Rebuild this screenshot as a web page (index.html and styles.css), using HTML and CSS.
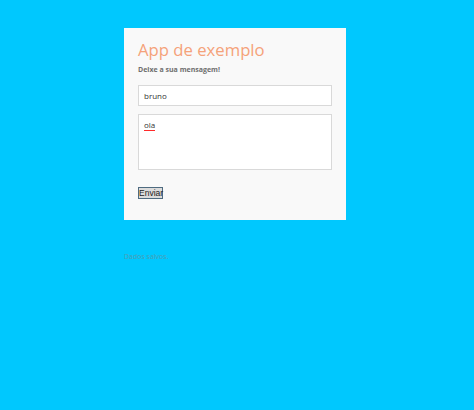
FILE: index.html
```html
<!DOCTYPE html>
<html lang="pt">
<head>
<meta charset="utf-8">
<title>App de exemplo</title>
<link rel="stylesheet" href="styles.css">
</head>
<body>
<main class="page">
  <section class="card">
    <h1 class="title">App de exemplo</h1>
    <p class="subtitle">Deixe a sua mensagem!</p>
    <form class="form">
      <input class="field" type="text" value="bruno">
      <div class="area" role="textbox" contenteditable="true" spellcheck="false"><span class="misspelt">ola</span></div>
      <div class="actions"><button class="btn" type="button">Enviar</button></div>
    </form>
  </section>
  <footer class="footer">Dados salvos.</footer>
</main>
</body>
</html>
```
FILE: styles.css
```css
html, body {
  margin: 0;
  padding: 0;
  background: #00c8fe;
  height: 100%;
}
body {
  font-family: "Open Sans", "DejaVu Sans", sans-serif;
}
.page {
  width: 222px;
  margin-left: 124px;
  padding-top: 28px;
}
.card {
  background: #f9f9f9;
  padding: 9px 14px 21px;
  box-sizing: border-box;
  height: 192px;
}
.title {
  margin: 0;
  font-weight: 400;
  font-size: 16.7px;
  line-height: 26px;
  color: #f5a27a;
}
.subtitle {
  margin: 1px 0 0;
  font-size: 7px;
  font-weight: 700;
  line-height: 11px;
  color: #6e6e6e;
}
.form {
  display: flex;
  flex-direction: column;
  margin-top: 10px;
}
.field {
  box-sizing: border-box;
  width: 194px;
  height: 21px;
  margin: 0;
  padding: 0 5px;
  border: 1px solid #d9d9d9;
  background: #fff;
  font-family: "Open Sans", sans-serif;
  font-size: 8px;
  color: #333;
  outline: none;
}
.area {
  box-sizing: border-box;
  width: 194px;
  height: 56px;
  margin-top: 8px;
  padding: 4px 5px;
  border: 1px solid #d9d9d9;
  background: #fff;
  font-size: 8px;
  line-height: 12px;
  color: #333;
  outline: none;
}
.misspelt {
  display: inline-block;
  line-height: 10px;
  padding-bottom: 1px;
  background: linear-gradient(#ff2a2a, #ff2a2a) left bottom / 100% 1px no-repeat;
}
.actions {
  margin-top: 17px;
  display: flex;
}
.btn {
  box-sizing: border-box;
  height: 12px;
  width: 25px;
  padding: 0;
  margin: 0;
  border: 1px solid #4f6b80;
  background: #dcdcdc;
  font-family: "Liberation Sans", Arial, sans-serif;
  font-size: 8.5px;
  line-height: 10px;
  color: #222;
}
.footer {
  margin-top: 32px;
  font-size: 7px;
  line-height: 10px;
  color: #4e9db3;
}
```
